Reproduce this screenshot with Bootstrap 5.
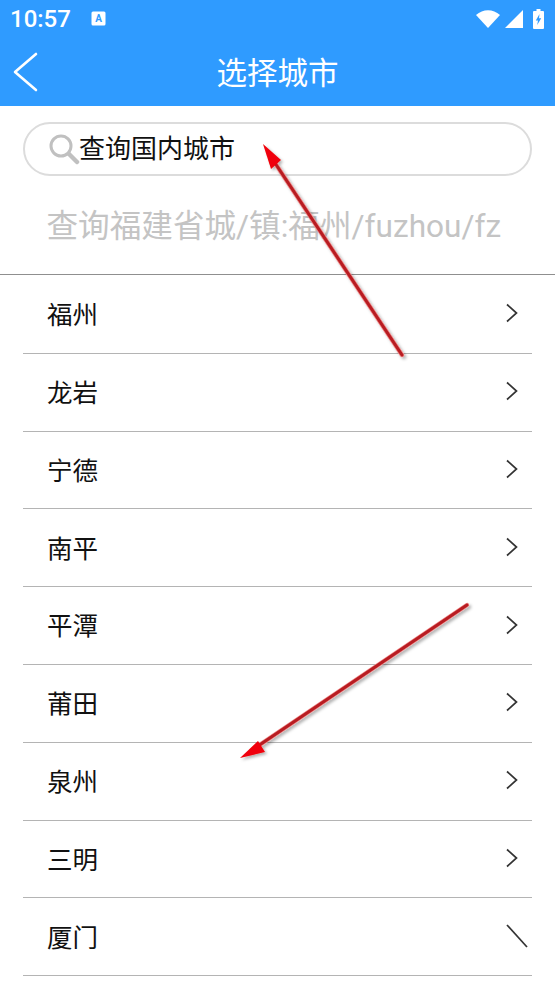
<!DOCTYPE html>
<html lang="zh">
<head>
  <meta charset="UTF-8">
  <title>选择城市</title>
  <link href="https://cdn.jsdelivr.net/npm/bootstrap@5.3.0/dist/css/bootstrap.min.css" rel="stylesheet">
  <style>
    body {
      font-family: "Roboto", "Noto Sans CJK SC", sans-serif;
      background: #fff;
      color: #111;
      height: 986px;
      overflow: hidden;
    }
    .app-top {
      background: #2f9bff;
      height: 106px;
      color: #fff;
    }
    .status-row {
      height: 37px;
      padding: 0 11px 0 10px;
    }
    .status-time {
      font-size: 24px;
      font-weight: 500;
      line-height: 30px;
      width: 81px;
    }
    .status-badge {
      margin-top: -1px;
    }
    .title-row {
      height: 69px;
    }
    .title-text {
      font-size: 30.5px;
      line-height: 1;
      margin-top: 5px;
    }
    .back-btn {
      left: 12px;
      top: 15px;
    }
    .search-pill {
      margin: 16px 23px 0 23px;
      height: 54px;
      border: 2px solid #dcdcdc;
      border-radius: 27px;
      padding-left: 23px;
      font-size: 26px;
    }
    .search-text {
      color: #111;
      margin-left: -1px;
    }
    .hint-text {
      margin: 27px 0 0 46.5px;
      height: 71px;
      color: #c4c4c4;
      font-size: 31.6px;
      line-height: 48px;
      white-space: nowrap;
    }
    .city-list {
      border-top: 1px solid #8f8f8f;
    }
    .city-row {
      margin: 0 23px;
      padding: 2px 14px 0 24px;
      height: 77.8px;
      border-bottom: 1px solid #b4b4b4;
      font-size: 25.5px;
      background: transparent;
      border-radius: 0;
      color: #111;
    }
    .city-row:first-child {
      height: 78.8px;
    }
    .list-group-flush > .city-row:last-child {
      border-bottom: 1px solid #b4b4b4;
    }
    .row-chevron {
      margin-top: -4px;
    }
    .odd-chevron {
      margin-right: -10px;
      margin-top: -4px;
    }
    .arrow-layer {
      left: 0;
      top: 0;
      pointer-events: none;
    }
  </style>
</head>
<body>
  <div class="position-relative">
    <div class="app-top">
      <div class="status-row d-flex align-items-center">
        <span class="status-time">10:57</span>
        <svg class="status-badge" width="15" height="15" viewBox="0 0 15 15">
          <rect x="0.5" y="0.5" width="14" height="14" rx="1.5" fill="#fff"/>
          <text x="7.5" y="10.5" font-family="Roboto" font-size="10" font-weight="700" text-anchor="middle" fill="#2f9bff">A</text>
        </svg>
        <div class="ms-auto d-flex align-items-center">
          <svg width="26" height="20" viewBox="0 0 26 20"><path d="M1 6C8-.5 18-.5 25 6L13 19Z" fill="#fff"/></svg>
          <svg class="ms-1" width="20" height="20" viewBox="0 0 20 20"><path d="M0 19 18 1V19Z" fill="#fff"/></svg>
          <svg class="ms-2" width="11" height="20" viewBox="0 0 11 20">
            <path d="M3.500 0h4v2H10a1 1 0 0 1 1 1v16a1 1 0 0 1-1 1H1a1 1 0 0 1-1-1V3a1 1 0 0 1 1-1h2.500Z" fill="#fff"/>
            <path d="M6.500 5 2.800 11.500H5L4.200 16 8.200 9.300H6Z" fill="#2f9bff"/>
          </svg>
        </div>
      </div>
      <div class="title-row position-relative d-flex align-items-center justify-content-center">
        <svg class="back-btn position-absolute" width="26" height="40" viewBox="0 0 26 40" fill="none" stroke="#fff" stroke-width="2.600" stroke-linecap="round" stroke-linejoin="round"><path d="M24 2 3 20 24 38"/></svg>
        <span class="title-text">选择城市</span>
      </div>
    </div>

    <div class="search-pill d-flex align-items-center">
      <svg width="32" height="32" viewBox="0 0 32 32" fill="none" stroke="#c0c0c0"><circle cx="13" cy="13" r="10" stroke-width="3"/><path d="M21 21 29 29" stroke-width="4.500" stroke-linecap="round"/></svg>
      <span class="search-text">查询国内城市</span>
    </div>
    <div class="hint-text">查询福建省城/镇:福州/fuzhou/fz</div>

    <div class="city-list list-group list-group-flush">
      <div class="city-row list-group-item d-flex align-items-center justify-content-between"><span>福州</span><svg class="row-chevron" width="12" height="20" viewBox="0 0 12 20" fill="none" stroke="#333" stroke-width="1.700"><path d="M1 1.500 10.500 10 1 18.500"/></svg></div>
      <div class="city-row list-group-item d-flex align-items-center justify-content-between"><span>龙岩</span><svg class="row-chevron" width="12" height="20" viewBox="0 0 12 20" fill="none" stroke="#333" stroke-width="1.700"><path d="M1 1.500 10.500 10 1 18.500"/></svg></div>
      <div class="city-row list-group-item d-flex align-items-center justify-content-between"><span>宁德</span><svg class="row-chevron" width="12" height="20" viewBox="0 0 12 20" fill="none" stroke="#333" stroke-width="1.700"><path d="M1 1.500 10.500 10 1 18.500"/></svg></div>
      <div class="city-row list-group-item d-flex align-items-center justify-content-between"><span>南平</span><svg class="row-chevron" width="12" height="20" viewBox="0 0 12 20" fill="none" stroke="#333" stroke-width="1.700"><path d="M1 1.500 10.500 10 1 18.500"/></svg></div>
      <div class="city-row list-group-item d-flex align-items-center justify-content-between"><span>平潭</span><svg class="row-chevron" width="12" height="20" viewBox="0 0 12 20" fill="none" stroke="#333" stroke-width="1.700"><path d="M1 1.500 10.500 10 1 18.500"/></svg></div>
      <div class="city-row list-group-item d-flex align-items-center justify-content-between"><span>莆田</span><svg class="row-chevron" width="12" height="20" viewBox="0 0 12 20" fill="none" stroke="#333" stroke-width="1.700"><path d="M1 1.500 10.500 10 1 18.500"/></svg></div>
      <div class="city-row list-group-item d-flex align-items-center justify-content-between"><span>泉州</span><svg class="row-chevron" width="12" height="20" viewBox="0 0 12 20" fill="none" stroke="#333" stroke-width="1.700"><path d="M1 1.500 10.500 10 1 18.500"/></svg></div>
      <div class="city-row list-group-item d-flex align-items-center justify-content-between"><span>三明</span><svg class="row-chevron" width="12" height="20" viewBox="0 0 12 20" fill="none" stroke="#333" stroke-width="1.700"><path d="M1 1.500 10.500 10 1 18.500"/></svg></div>
      <div class="city-row list-group-item d-flex align-items-center justify-content-between"><span>厦门</span><svg class="odd-chevron" width="22" height="24" viewBox="0 0 22 24" fill="none" stroke="#333" stroke-width="1.700"><path d="M1 1 21 23"/></svg></div>
    </div>

    <!-- annotation arrows drawn on top of the screenshot -->
    <svg class="arrow-layer position-absolute" width="555" height="986" viewBox="0 0 555 986">
      <defs>
        <filter id="arrowShade" x="-20%" y="-20%" width="140%" height="140%">
          <feDropShadow dx="2" dy="2" stdDeviation="1.500" flood-color="#000" flood-opacity="0.3"/>
        </filter>
      </defs>
      <g filter="url(#arrowShade)">
        <path d="M402 355 273 160" stroke="#e88" stroke-width="4.500" stroke-linecap="round"/>
        <path d="M402 355 273 160" stroke="#b81c20" stroke-width="3" stroke-linecap="round"/>
        <path d="M263 144 281 160 271 169Z" fill="#f00008"/>
        <path d="M467 605 258 746" stroke="#e88" stroke-width="4.500" stroke-linecap="round"/>
        <path d="M467 605 258 746" stroke="#b81c20" stroke-width="3" stroke-linecap="round"/>
        <path d="M240 758 258 741 265 752Z" fill="#f00008"/>
      </g>
    </svg>
  </div>
  <script src="https://cdn.jsdelivr.net/npm/bootstrap@5.3.0/dist/js/bootstrap.bundle.min.js"></script>
</body>
</html>
